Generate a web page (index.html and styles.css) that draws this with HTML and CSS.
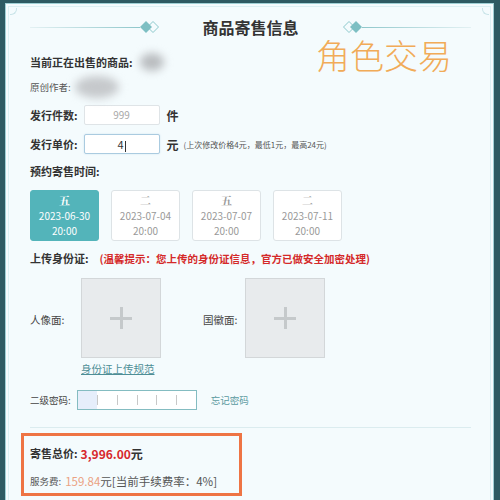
FILE: index.html
```html
<!DOCTYPE html>
<html lang="zh-CN">
<head>
    <meta charset="UTF-8">
    <title>商品寄售信息</title>
    <link rel="stylesheet" href="styles.css">
</head>
<body>
    <div class="panel">
        <div class="frame">
            <span class="corner corner-left"></span>
            <span class="corner corner-right"></span>

            <div class="header">
                <span class="rule rule-left"></span>
                <svg class="ornament" width="20" height="14" viewBox="0 0 20 14">
                    <path d="M13 1.5 L18.5 7 L13 12.5 L7.5 7 Z" fill="none" stroke="#8cc9cc" stroke-width="1"/>
                    <path d="M6 1 L12 7 L6 13 L0 7 Z" fill="#7dbfc3"/>
                </svg>
                <h1>商品寄售信息</h1>
                <svg class="ornament" width="20" height="14" viewBox="0 0 20 14">
                    <path d="M7 1.5 L12.5 7 L7 12.5 L1.5 7 Z" fill="none" stroke="#8cc9cc" stroke-width="1"/>
                    <path d="M14 1 L20 7 L14 13 L8 7 Z" fill="#7dbfc3"/>
                </svg>
                <span class="rule rule-right"></span>
            </div>

            <div class="stamp">角色交易</div>

            <div class="row row-product">
                <span class="label">当前正在出售的商品:</span>
                <span class="blur blur-name"></span>
            </div>
            <div class="row row-author">
                <span class="small-label">原创作者:</span>
                <span class="blur blur-author"></span>
            </div>

            <div class="row row-field">
                <span class="label">发行件数:</span>
                <div class="field placeholder">999</div>
                <span class="unit">件</span>
            </div>
            <div class="row row-field">
                <span class="label">发行单价:</span>
                <div class="field focused">4<span class="caret"></span></div>
                <span class="unit">元</span>
                <span class="note">(上次修改价格4元，最低1元，最高24元)</span>
            </div>

            <div class="row row-title">
                <span class="label">预约寄售时间:</span>
            </div>
            <div class="dates">
                <div class="date active">
                    <span class="weekday">五</span>
                    <span>2023-06-30</span>
                    <span>20:00</span>
                </div>
                <div class="date">
                    <span class="weekday">二</span>
                    <span>2023-07-04</span>
                    <span>20:00</span>
                </div>
                <div class="date">
                    <span class="weekday">五</span>
                    <span>2023-07-07</span>
                    <span>20:00</span>
                </div>
                <div class="date">
                    <span class="weekday">二</span>
                    <span>2023-07-11</span>
                    <span>20:00</span>
                </div>
            </div>

            <div class="row row-upload-title">
                <span class="label">上传身份证:</span>
                <span class="warning">(温馨提示：您上传的身份证信息，官方已做安全加密处理)</span>
            </div>
            <div class="uploads">
                <div class="upload">
                    <span class="upload-label">人像面:</span>
                    <div class="upload-box"><span class="plus"></span></div>
                </div>
                <div class="upload">
                    <span class="upload-label">国徽面:</span>
                    <div class="upload-box"><span class="plus"></span></div>
                </div>
            </div>
            <a class="rules-link" href="#">身份证上传规范</a>

            <div class="row row-password">
                <span class="small-label dark">二级密码:</span>
                <div class="pin">
                    <span class="cell current"></span>
                    <span class="cell"></span>
                    <span class="cell"></span>
                    <span class="cell"></span>
                    <span class="cell"></span>
                    <span class="cell"></span>
                </div>
                <a class="forgot" href="#">忘记密码</a>
            </div>

            <div class="divider"></div>

            <div class="summary">
                <div class="total">
                    <span class="label">寄售总价:</span>
                    <span class="price">3,996.00</span><span class="yuan">元</span>
                </div>
                <div class="fee">
                    <span class="small-label">服务费:</span>
                    <span class="fee-value">159.84</span><span class="fee-text">元[当前手续费率：4%]</span>
                </div>
            </div>
        </div>
    </div>
</body>
</html>
```

FILE: styles.css
```css
body {
    margin: 0;
    background: #2d5a62;
    font-family: "Noto Sans CJK SC", "Noto Sans", sans-serif;
    color: #333;
    height: 500px;
    overflow: hidden;
}

.panel {
    margin: 3px 6px 0 5px;
    border: 1px solid #9fd0d5;
    padding: 2px;
    background: #f4fbfd;
    height: 520px;
}
.frame {
    position: relative;
    border: 1px solid #dcf0f3;
    padding: 5px 19px 0 21px;
    height: 100%;
    box-sizing: border-box;
}
.corner {
    position: absolute;
    top: 1px;
    width: 6px;
    height: 6px;
    border: 1px solid #c9e4e8;
}
.corner-left {
    left: 1px;
    border-radius: 0 0 6px 0;
    border-top: none;
    border-left: none;
}
.corner-right {
    right: 1px;
    border-radius: 0 0 0 6px;
    border-top: none;
    border-right: none;
}

/* header */
.header {
    display: flex;
    align-items: center;
    height: 30px;
}
.rule {
    flex: 1;
    height: 1px;
}
.rule-left {
    background: linear-gradient(to right, #e3f1f3, #8fc7cb);
}
.rule-right {
    background: linear-gradient(to right, #8fc7cb, #e3f1f3);
}
.ornament {
    display: block;
}
.header h1 {
    margin: 0 43px;
    font-size: 16px;
    font-weight: bold;
    color: #333;
}

.stamp {
    position: absolute;
    left: 307px;
    top: 26px;
    font-size: 34px;
    line-height: 44px;
    color: #f1ab58;
    font-weight: 300;
}

/* rows */
.row {
    display: flex;
    align-items: center;
}
.label {
    font-size: 11px;
    font-weight: bold;
    color: #333;
}
.small-label {
    font-size: 9.5px;
    color: #555;
}
.small-label.dark {
    color: #444;
}
.row-product {
    height: 20px;
    margin-top: 10px;
}
.row-author {
    height: 18px;
    margin-top: 6px;
}
.blur {
    display: inline-block;
    background: #b9bcbf;
    border-radius: 50%;
    filter: blur(4px);
}
.blur-name {
    width: 24px;
    height: 18px;
    margin-left: 7px;
}
.blur-author {
    width: 44px;
    height: 22px;
    margin-left: 4px;
    background: #c6c9cc;
}

.row-field {
    height: 20px;
    margin-top: 9px;
}
.field {
    width: 74px;
    height: 18px;
    margin-left: 6px;
    border: 1px solid #dfe4e7;
    border-radius: 2px;
    background: #fff;
    font-size: 11px;
    line-height: 18px;
    text-align: center;
    color: #333;
}
.field.placeholder {
    color: #aaa;
    font-size: 10px;
}
.field.focused {
    border-color: #aacbe0;
    box-shadow: 0 0 2px #cfe3f0;
}
.caret {
    display: inline-block;
    width: 1px;
    height: 11px;
    background: #333;
    vertical-align: middle;
    margin-left: 1px;
}
.unit {
    margin-left: 7px;
    font-size: 12px;
    font-weight: bold;
}
.note {
    margin-left: 5px;
    font-size: 8px;
    color: #555;
}

.row-title {
    height: 18px;
    margin-top: 8px;
}

/* dates */
.dates {
    display: flex;
    gap: 12px;
    margin-top: 10px;
}
.date {
    width: 67px;
    height: 49px;
    border: 1px solid #dde3e6;
    border-radius: 3px;
    background: #fff;
    display: flex;
    flex-direction: column;
    align-items: center;
    justify-content: center;
    font-size: 10px;
    color: #999;
}
.date span {
    display: block;
    height: 15px;
    line-height: 15px;
}
.date .weekday {
    font-family: "Noto Serif CJK SC", "Liberation Serif", serif;
    font-size: 11px;
    font-weight: bold;
}
.date.active {
    background: #53b4ba;
    border-color: #53b4ba;
    color: #fff;
}

/* id card upload */
.row-upload-title {
    height: 18px;
    margin-top: 8px;
}
.warning {
    margin-left: 11px;
    font-size: 10.5px;
    font-weight: bold;
    color: #d42a2a;
}
.uploads {
    display: flex;
    gap: 42px;
    margin-top: 11px;
}
.upload {
    display: flex;
    align-items: center;
}
.upload-label {
    width: 51px;
    font-size: 10.5px;
    color: #444;
    padding-top: 3px;
}
.upload:last-child .upload-label {
    width: 42px;
}
.upload-box {
    position: relative;
    width: 78px;
    height: 78px;
    border: 1px solid #d3d7d9;
    background: #e8ebed;
}
.plus::before,
.plus::after {
    content: "";
    position: absolute;
    background: #c5c9cb;
    left: 50%;
    top: 50%;
}
.plus::before {
    width: 22px;
    height: 3px;
    margin: -1px 0 0 -11px;
}
.plus::after {
    width: 3px;
    height: 22px;
    margin: -11px 0 0 -1px;
}
.rules-link {
    display: block;
    width: max-content;
    margin: 3px 0 0 51px;
    font-size: 10.5px;
    line-height: 16px;
    color: #4d8e96;
    text-decoration: underline;
}

/* password */
.row-password {
    height: 20px;
    margin-top: 13px;
}
.pin {
    display: flex;
    margin-left: 6px;
    width: 118px;
    height: 18px;
    border: 1px solid #84bcc1;
    background: #fff;
}
.cell {
    position: relative;
    flex: 1;
}
.cell + .cell::before {
    content: "";
    position: absolute;
    left: 0;
    top: 4px;
    height: 10px;
    width: 1px;
    background: #c8c8c8;
}
.cell.current {
    background: #e6eefb;
}
.forgot {
    margin-left: 14px;
    font-size: 9.5px;
    color: #5a9aa0;
    text-decoration: none;
}

.divider {
    height: 1px;
    background: #dbecef;
    margin-top: 17px;
}

/* summary */
.summary {
    width: 209px;
    height: 57px;
    margin: 5px 0 0 -9px;
    border: 3px solid #ee7444;
    padding-left: 6px;
}
.total {
    display: flex;
    align-items: center;
    height: 20px;
    margin-top: 7px;
}
.price {
    font-size: 12px;
    font-weight: bold;
    color: #d7282c;
    margin-left: 3px;
}
.yuan {
    font-size: 12px;
    font-weight: bold;
}
.fee {
    display: flex;
    align-items: center;
    height: 18px;
    margin-top: 9px;
}
.fee-value {
    font-size: 11.5px;
    color: #eba283;
    margin-left: 4px;
}
.fee-text {
    font-size: 11.5px;
    color: #555;
}
```
